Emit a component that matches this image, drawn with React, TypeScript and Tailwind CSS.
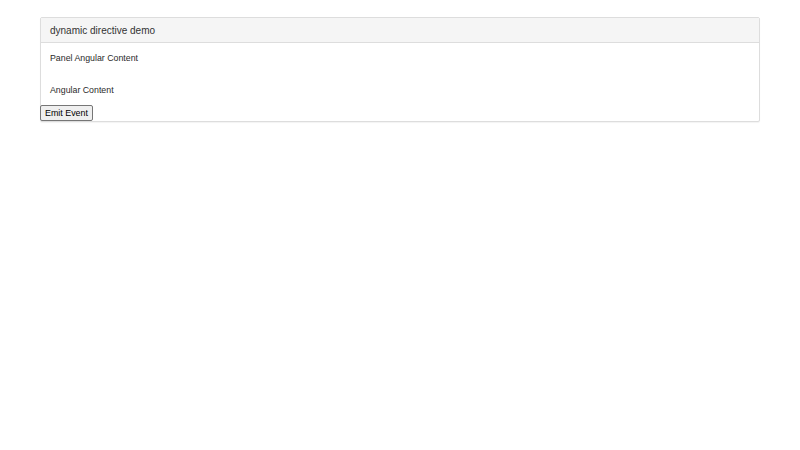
import React from "react";

export default function App() {
  return (
    <div
      className="w-[800px] h-[450px] bg-white text-[#333] pt-[17px] px-[40px]"
      style={{ fontFamily: '"Liberation Sans", Arial, sans-serif' }}
    >
      <div className="border border-[#dddddd] rounded-[2px] shadow-[0_1px_1px_rgba(0,0,0,0.05)] bg-white">
        <div className="bg-[#f5f5f5] border-b border-[#dddddd] px-[9px] h-[25px] flex items-center">
          <h3 className="text-[10px] leading-[11px] text-[#333]">dynamic directive demo</h3>
        </div>
        <div className="px-[9px] pt-[9px] pb-[9px] text-[8.8px] leading-[12.5px] text-[#2a2a2a]">
          <p className="mb-[19px]">Panel Angular Content</p>
          <div>Angular Content</div>
        </div>
        <button className="block w-[53px] h-[16px] bg-[#efefef] border border-[#767676] rounded-[2px] text-[8.9px] leading-[12px] text-black -ml-px p-0">
          Emit Event
        </button>
      </div>
    </div>
  );
}
